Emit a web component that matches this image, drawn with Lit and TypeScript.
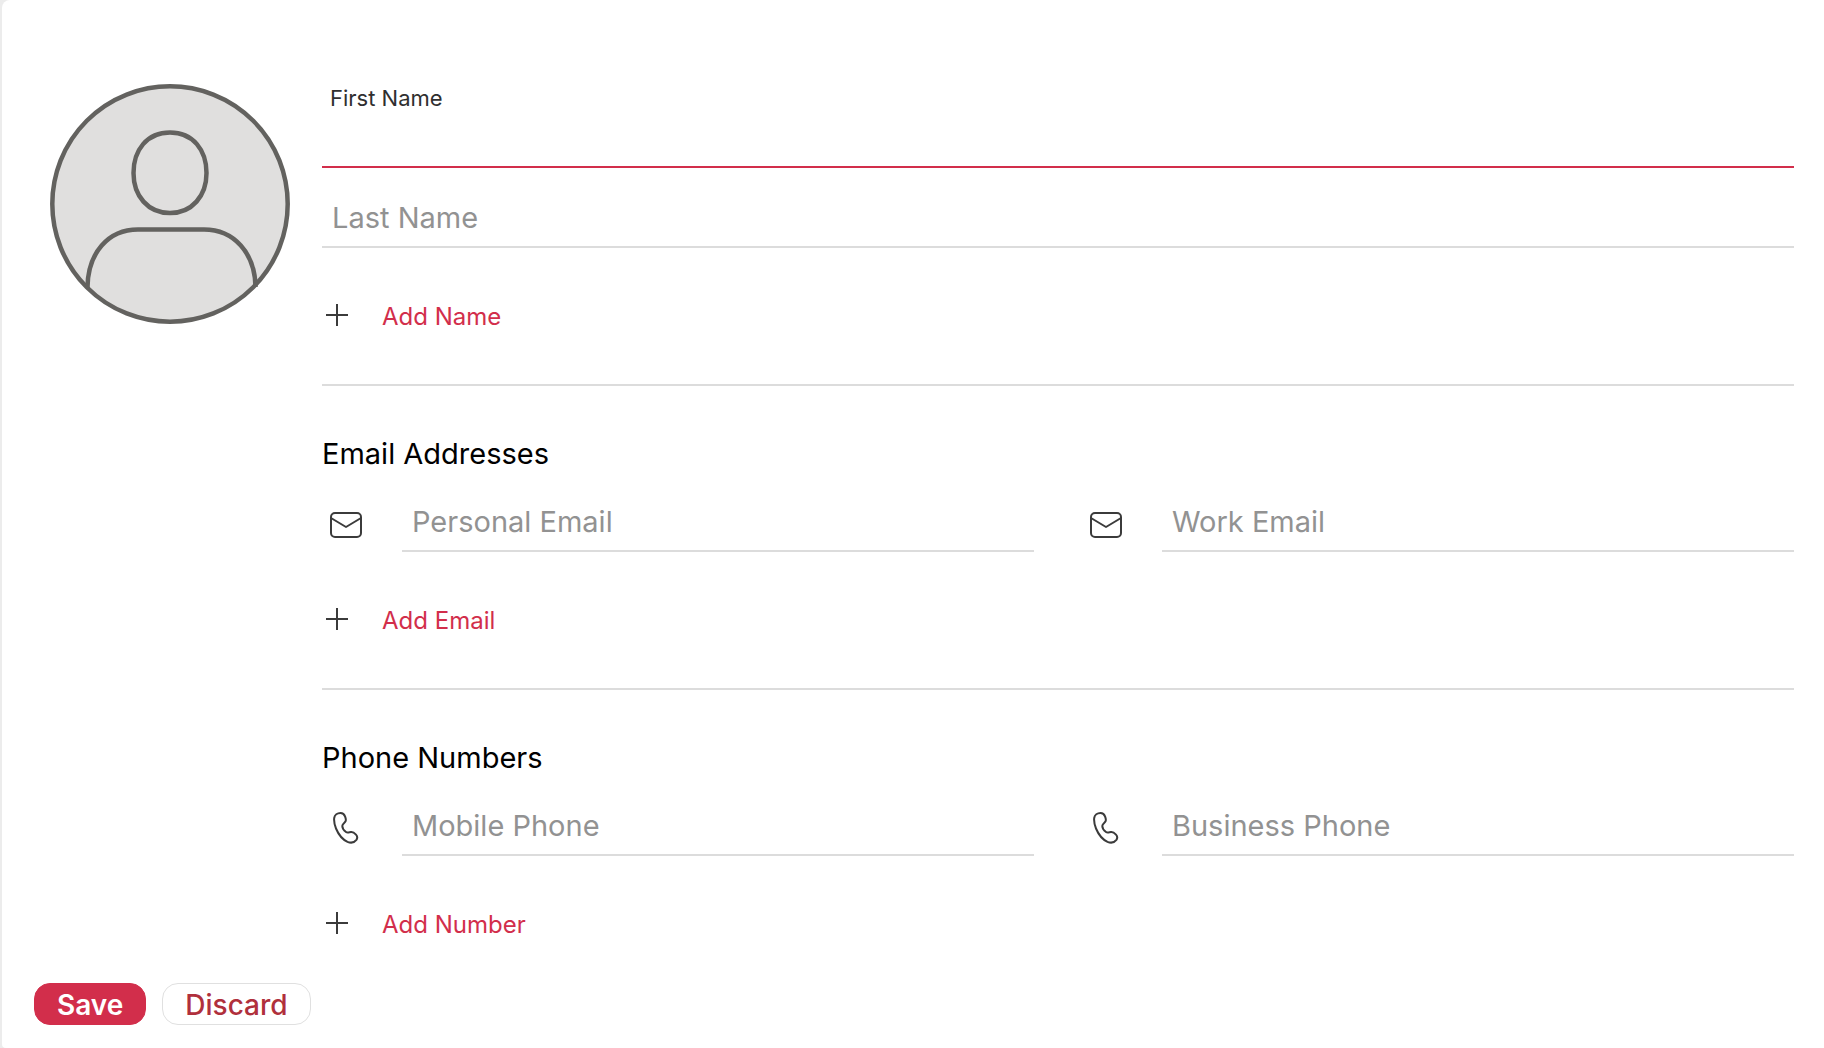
import { LitElement, html, css, svg } from "lit";
import { customElement } from "lit/decorators.js";

const plusIcon = html`<svg class="plus" viewBox="0 0 22 22" aria-hidden="true">
  <path d="M11 0V22M0 11H22" />
</svg>`;

const mailIcon = svg`
  <rect x="1" y="5" width="30" height="24" rx="4" />
  <path d="M1 10L16 19L31 10" />`;

const phoneIcon = svg`
  <path d="M4.2 6C4.6 3 7.5 1 10.5 1C13 1 14.2 2 15 4.3C15.8 6.5 16.3 7.5 15.6 9.2C14.9 10.9 12.3 11.5 12.3 14C12.3 16 14 18.5 16 20C17.5 21.2 19.2 20.2 21 20C23 19.8 24.5 21 26 22.7C27.5 24.4 27.7 26 26.4 27.8C24.3 30.5 20.8 31.2 17.5 29.8C12.5 27.5 8.5 22.5 6 16.5C4.5 12.7 3.8 9.4 4.2 6Z" />`;

interface Field {
  id: string;
  label: string;
  type: string;
}

interface Section {
  title: string;
  action: string;
  icon: unknown;
  fields: Field[];
}

const sections: Section[] = [
  {
    title: "Email Addresses",
    action: "Add Email",
    icon: mailIcon,
    fields: [
      { id: "personal-email", label: "Personal Email", type: "email" },
      { id: "work-email", label: "Work Email", type: "email" },
    ],
  },
  {
    title: "Phone Numbers",
    action: "Add Number",
    icon: phoneIcon,
    fields: [
      { id: "mobile-phone", label: "Mobile Phone", type: "tel" },
      { id: "business-phone", label: "Business Phone", type: "tel" },
    ],
  },
];

@customElement("app-root")
export class AppRoot extends LitElement {
  static styles = css`
    :host {
      display: block;
      background: #ececec;
      color: #000;
      font-family: Inter, "Liberation Sans", sans-serif;
    }
    * {
      box-sizing: border-box;
    }
    .card {
      display: flex;
      flex-direction: column;
      min-height: 100vh;
      margin-left: 2px;
      padding: 84px 30px 23px 32px;
      border-radius: 8px 0 0 4px;
      background: #fff;
    }
    .body {
      display: flex;
      align-items: flex-start;
      gap: 32px;
      flex: 1;
      padding-left: 16px;
    }
    .avatar {
      flex: none;
      width: 240px;
      height: 240px;
      fill: #e0dfde;
      stroke: #63625f;
      stroke-width: 4.5;
    }
    .fields {
      flex: 1;
      min-width: 0;
    }
    .group,
    .section {
      display: flex;
      flex-direction: column;
      padding-bottom: 47px;
      border-bottom: 2px solid #dcdcdc;
    }
    .section {
      padding-top: 48px;
    }
    .section:last-child {
      padding-bottom: 0;
      border-bottom: 0;
    }
    .small-label {
      padding-left: 8px;
      color: #2f2f2f;
      font-size: 22px;
      line-height: 28px;
    }
    .input {
      display: block;
      width: 100%;
      height: 56px;
      margin: 0;
      padding: 0 10px 4px;
      border: 0;
      border-bottom: 2px solid #dcdcdc;
      border-radius: 0;
      outline: 0;
      background: transparent;
      color: #2f2f2f;
      font: 400 29px/40px Inter, "Liberation Sans", sans-serif;
    }
    .input::placeholder {
      color: #929292;
      opacity: 1;
    }
    .active {
      border-color: #d22e4b;
    }
    .last {
      margin-top: 24px;
    }
    .title {
      margin: 0;
      font-size: 29px;
      font-weight: 400;
      line-height: 40px;
    }
    .pair {
      display: grid;
      grid-template-columns: 1fr 1fr;
      gap: 48px;
      margin-top: 22px;
    }
    .row {
      display: flex;
      align-items: center;
      gap: 40px;
      padding-left: 8px;
    }
    .icon-label {
      display: flex;
      flex: none;
    }
    .icon {
      width: 32px;
      height: 32px;
      fill: none;
      stroke: #3b3b3b;
      stroke-width: 2;
      stroke-linejoin: round;
    }
    .add {
      display: flex;
      align-items: center;
      align-self: flex-start;
      gap: 34px;
      height: 44px;
      margin: 45px 0 0;
      padding: 0 4px;
      border: 0;
      background: none;
      color: #d22e4b;
      font: 400 24px/40px Inter, "Liberation Sans", sans-serif;
      cursor: pointer;
    }
    .add-text {
      padding-top: 3px;
    }
    .plus {
      width: 22px;
      height: 22px;
      stroke: #3b3b3b;
      stroke-width: 2;
    }
    .actions {
      display: flex;
      gap: 16px;
    }
    .button {
      height: 42px;
      padding: 2px 22px 0;
      border: 1px solid #e0e0e0;
      border-radius: 16px;
      background: #fff;
      color: #b0303c;
      font: 500 28px/38px Inter, "Liberation Sans", sans-serif;
      cursor: pointer;
    }
    .primary {
      border-color: #d22e4b;
      background: #d22e4b;
      color: #fff;
      font-weight: 600;
    }
  `;

  private renderAdd(label: string) {
    return html`<button class="add" type="button">
      ${plusIcon}<span class="add-text">${label}</span>
    </button>`;
  }

  private renderSection(section: Section) {
    return html`<section class="section">
      <h2 class="title">${section.title}</h2>
      <div class="pair">
        ${section.fields.map(
          (field) => html`<div class="row">
            <label class="icon-label" for=${field.id}>
              <svg class="icon" viewBox="0 0 32 32" role="img" aria-label=${field.label}>${section.icon}</svg>
            </label>
            <input class="input" id=${field.id} type=${field.type} placeholder=${field.label} />
          </div>`,
        )}
      </div>
      ${this.renderAdd(section.action)}
    </section>`;
  }

  render() {
    return html`<form class="card" @submit=${(e: Event) => e.preventDefault()}>
      <div class="body">
        <svg class="avatar" viewBox="0 0 240 240" aria-hidden="true">
          <circle cx="120" cy="120" r="117.7" />
          <path d="M120 48.5C143 48.5 156.5 66 156.5 89C156.5 112 142 129 120 129C98 129 83.5 112 83.5 89C83.5 66 97 48.5 120 48.5Z" />
          <path fill="none" d="M37.5 203C38 169 58 145.5 88 145.5H154C184 145.5 205 169 205.5 203" />
        </svg>
        <div class="fields">
          <div class="group">
            <label class="small-label" for="first-name">First Name</label>
            <input class="input active" id="first-name" type="text" />
            <input class="input last" id="last-name" type="text" placeholder="Last Name" aria-label="Last Name" />
            ${this.renderAdd("Add Name")}
          </div>
          ${sections.map((section) => this.renderSection(section))}
        </div>
      </div>
      <div class="actions">
        <button class="button primary" type="submit">Save</button>
        <button class="button" type="reset">Discard</button>
      </div>
    </form>`;
  }
}
